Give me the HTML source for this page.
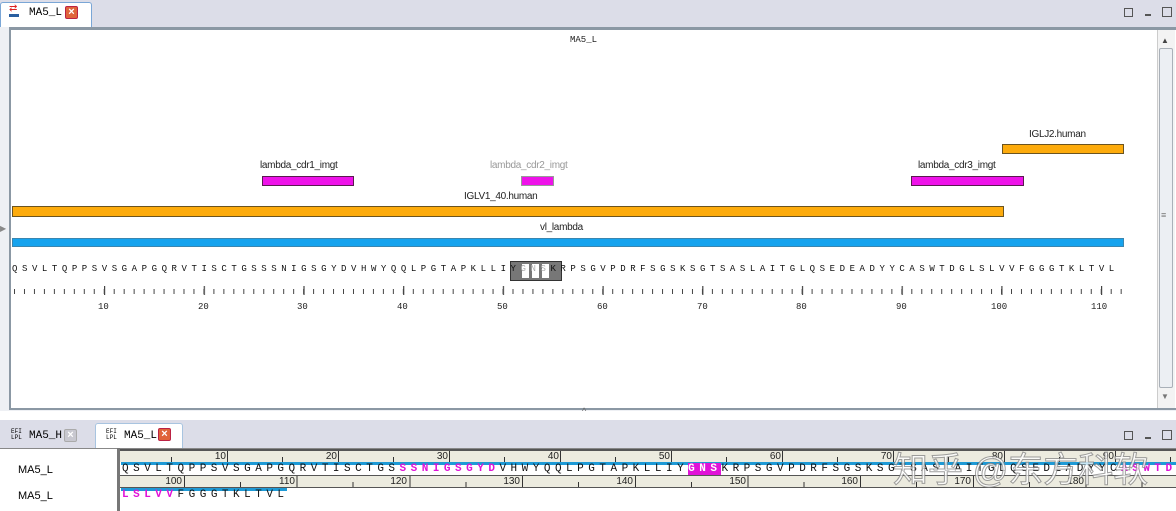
<!DOCTYPE html>
<html><head><meta charset="utf-8"><style>
*{margin:0;padding:0;box-sizing:border-box}
body{width:1176px;height:511px;overflow:hidden;background:#fff;font-family:"Liberation Sans",sans-serif;position:relative}
.a{position:absolute}
.bar{position:absolute;border:1px solid #6b5420}
.or{background:#fdab0c}
.mg{background:#ee12e9;border-color:#5a1a50}
.lbl{position:absolute;font-size:10px;color:#222;white-space:nowrap;letter-spacing:-0.3px}
.seq{position:absolute;font-family:"Liberation Mono",monospace;font-size:9px;letter-spacing:4.57px;white-space:pre;color:#111}
.seq2{position:absolute;font-family:"Liberation Mono",monospace;font-size:11px;letter-spacing:4.5px;white-space:pre;color:#111}
.num{position:absolute;font-size:9px;color:#222;font-family:"Liberation Mono",monospace}
.rl{position:absolute;font-size:10px;color:#222;text-align:right;width:30px}
.x{display:inline-block;width:13px;height:13px;background:#e0643a;border:1px solid #b24;color:#fff;font-size:11px;line-height:11px;text-align:center;font-weight:bold;border-radius:2px}
.xg{background:#c8c8d0;border-color:#aaa}
.m{color:#e012d8;font-weight:bold}
</style></head><body>
<div class="a" style="left:0;top:0;width:1176px;height:27px;background:#dcdde8"></div>
<div class="a" style="left:0;top:2px;width:92px;height:25px;background:#fff;border:1px solid #7aa6d6;border-bottom:none;border-radius:3px 3px 0 0"></div>
<div class="a" style="left:9px;top:6px;font-size:10px;color:#d22;line-height:6px">⇄<br><span style="color:#2a5fa0">▬</span></div>
<div class="a" style="left:29px;top:7px;font-size:11px;font-family:'Liberation Mono',monospace">MA5_L</div>
<div class="a x" style="left:65px;top:6px">×</div>
<div class="a" style="left:1124px;top:8px;width:9px;height:9px;border:1px solid #555"></div>
<div class="a" style="left:1145px;top:14px;width:6px;height:2px;background:#555"></div>
<div class="a" style="left:1162px;top:7px;width:10px;height:10px;border:1px solid #555"></div>
<div class="a" style="left:0;top:27px;width:1176px;height:384px;background:#eef0f4"></div>
<div class="a" style="left:9px;top:27px;width:1167px;height:383px;background:#fff;border-top:3px solid #8b98a4;border-left:2px solid #8b98a4;border-bottom:2px solid #8b98a4"></div>
<div class="a" style="left:1157px;top:30px;width:18px;height:378px;background:#f3f3f3;border-left:1px solid #ccc"></div>
<div class="a" style="left:1159px;top:48px;width:14px;height:340px;background:#eceff3;border:1px solid #a9b0b8;border-radius:2px"></div>
<div class="a" style="left:1161px;top:36px;font-size:8px;color:#444">▲</div>
<div class="a" style="left:1161px;top:392px;font-size:8px;color:#777">▼</div>
<div class="a" style="left:1161px;top:210px;font-size:9px;color:#777">≡</div>
<div class="a" style="left:0;top:224px;font-size:8px;color:#888">▶</div>
<div class="a" style="left:582px;top:406px;font-size:9px;color:#666">^</div>
<div class="a" style="left:570px;top:35px;font-size:9px;font-family:'Liberation Mono',monospace;color:#222">MA5_L</div>

<div class="lbl" style="left:1029px;top:129px">IGLJ2.human</div>
<div class="bar or" style="left:1002px;top:144px;width:122px;height:10px"></div>
<div class="lbl" style="left:260px;top:160px">lambda_cdr1_imgt</div>
<div class="bar mg" style="left:262px;top:176px;width:92px;height:10px"></div>
<div class="lbl" style="left:490px;top:160px;color:#999">lambda_cdr2_imgt</div>
<div class="bar mg" style="left:521px;top:176px;width:33px;height:10px;border-color:#999"></div>
<div class="lbl" style="left:918px;top:160px">lambda_cdr3_imgt</div>
<div class="bar mg" style="left:911px;top:176px;width:113px;height:10px"></div>
<div class="lbl" style="left:464px;top:191px">IGLV1_40.human</div>
<div class="bar or" style="left:12px;top:206px;width:992px;height:11px"></div>
<div class="lbl" style="left:540px;top:222px">vl_lambda</div>
<div class="a" style="left:12px;top:238px;width:1112px;height:9px;background:#16a3ee;border:1px solid #3a86b0"></div>

<div class="a" style="left:510px;top:261px;width:52px;height:20px;background:#777;border:1px solid #333"></div>
<div class="a" style="left:522px;top:264px;width:7px;height:14px;background:#fff"></div>
<div class="a" style="left:532px;top:264px;width:7px;height:14px;background:#fff"></div>
<div class="a" style="left:542px;top:264px;width:7px;height:14px;background:#fff"></div>
<div class="seq" style="left:12px;top:264px">QSVLTQPPSVSGAPGQRVTISCTGSSSNIGSGYDVHWYQQLPGTAPKLLIY<span style="color:#aaa">GNS</span>KRPSGVPDRFSGSKSGTSASLAITGLQSEDEADYYCASWTDGLSLVVFGGGTKLTVL</div>
<svg class="a" style="left:0;top:284px" width="1140" height="14">
<defs>
<pattern id="p1" x="14" y="0" width="9.97" height="14" patternUnits="userSpaceOnUse"><rect x="0" y="5" width="1" height="5" fill="#444"/></pattern>
<pattern id="p2" x="104" y="0" width="99.7" height="14" patternUnits="userSpaceOnUse"><rect x="0" y="2" width="1.2" height="9" fill="#444"/></pattern>
</defs>
<rect x="14" y="0" width="1111" height="14" fill="url(#p1)"/>
<rect x="103" y="0" width="1010" height="14" fill="url(#p2)"/>
</svg>
<div class="num" style="left:98px;top:302px">10</div><div class="num" style="left:198px;top:302px">20</div><div class="num" style="left:297px;top:302px">30</div><div class="num" style="left:397px;top:302px">40</div><div class="num" style="left:497px;top:302px">50</div><div class="num" style="left:597px;top:302px">60</div><div class="num" style="left:697px;top:302px">70</div><div class="num" style="left:796px;top:302px">80</div><div class="num" style="left:896px;top:302px">90</div><div class="num" style="left:991px;top:302px">100</div><div class="num" style="left:1091px;top:302px">110</div>

<div class="a" style="left:0;top:420px;width:1176px;height:28px;background:#dcdde8"></div>
<div class="a" style="left:95px;top:423px;width:88px;height:25px;background:#fff;border:1px solid #a8c4e0;border-bottom:none;border-radius:3px 3px 0 0"></div>
<div class="a" style="left:11px;top:429px;font-size:6px;line-height:6px;font-family:'Liberation Mono',monospace">EFI<br>LPL</div>
<div class="a" style="left:29px;top:430px;font-size:11px;font-family:'Liberation Mono',monospace">MA5_H</div>
<div class="a x xg" style="left:64px;top:429px">×</div>
<div class="a" style="left:106px;top:429px;font-size:6px;line-height:6px;font-family:'Liberation Mono',monospace">EFI<br>LPL</div>
<div class="a" style="left:124px;top:430px;font-size:11px;font-family:'Liberation Mono',monospace">MA5_L</div>
<div class="a x" style="left:158px;top:428px">×</div>
<div class="a" style="left:1124px;top:431px;width:9px;height:9px;border:1px solid #555"></div>
<div class="a" style="left:1145px;top:437px;width:6px;height:2px;background:#555"></div>
<div class="a" style="left:1162px;top:430px;width:10px;height:10px;border:1px solid #555"></div>

<div class="a" style="left:0;top:448px;width:1176px;height:63px;background:#fff;border-top:1px solid #888"></div>
<div class="a" style="left:117px;top:448px;width:3px;height:63px;background:#777"></div>
<div class="a" style="left:18px;top:464px;font-size:11px">MA5_L</div>
<div class="a" style="left:18px;top:490px;font-size:11px">MA5_L</div>
<div class="a" style="left:120px;top:449px;width:1056px;height:13px;background:#ecebdf;border-top:2px solid #555"></div>
<div class="a" style="left:227px;top:451px;width:950px;height:11px;background:repeating-linear-gradient(90deg,#333 0 1px,transparent 1px 111px)"></div>
<div class="a" style="left:171px;top:457px;width:1000px;height:5px;background:repeating-linear-gradient(90deg,#333 0 1px,transparent 1px 111px)"></div>
<div class="rl" style="left:196px;top:451px">10</div><div class="rl" style="left:307px;top:451px">20</div><div class="rl" style="left:418px;top:451px">30</div><div class="rl" style="left:529px;top:451px">40</div><div class="rl" style="left:640px;top:451px">50</div><div class="rl" style="left:751px;top:451px">60</div><div class="rl" style="left:862px;top:451px">70</div><div class="rl" style="left:973px;top:451px">80</div><div class="rl" style="left:1084px;top:451px">90</div>
<div class="a" style="left:121px;top:462px;width:1055px;height:3px;background:#1e9ad6"></div>
<div class="seq2" style="left:122px;top:463px">QSVLTQPPSVSGAPGQRVTISCTGS<span class="m">SSNIGSGYD</span>VHWYQQLPGTAPKLLIY<span style="background:#e012d8;color:#fff;font-weight:bold">GNS</span>KRPSGVPDRFSGSKSGTSASLAITGLQSEDEADYYC<span class="m">ASWTDG</span></div>
<div class="a" style="left:120px;top:475px;width:1056px;height:13px;background:#ecebdf;border-top:1px solid #555;border-bottom:1px solid #555"></div>
<div class="a" style="left:184px;top:476px;width:992px;height:11px;background:repeating-linear-gradient(90deg,#333 0 1px,transparent 1px 112.7px)"></div>
<div class="a" style="left:240px;top:482px;width:936px;height:5px;background:repeating-linear-gradient(90deg,#333 0 1px,transparent 1px 112.7px)"></div>
<div class="rl" style="left:152px;top:476px">100</div><div class="rl" style="left:265px;top:476px">110</div><div class="rl" style="left:377px;top:476px">120</div><div class="rl" style="left:490px;top:476px">130</div><div class="rl" style="left:603px;top:476px">140</div><div class="rl" style="left:716px;top:476px">150</div><div class="rl" style="left:828px;top:476px">160</div><div class="rl" style="left:941px;top:476px">170</div><div class="rl" style="left:1054px;top:476px">180</div><div class="rl" style="left:1166px;top:476px">190</div>
<div class="a" style="left:121px;top:488px;width:166px;height:3px;background:#1e9ad6"></div>
<div class="seq2" style="left:122px;top:489px"><span class="m">LSLVV</span>FGGGTKLTVL</div>

<div class="a" style="left:893px;top:442px;font-family:'Liberation Sans','Noto Sans CJK SC',sans-serif;font-size:35px;color:rgba(255,255,255,0.75);-webkit-text-stroke:1px rgba(120,120,120,0.7);white-space:nowrap;letter-spacing:0px">知乎 @东方科软</div>
</body></html>
